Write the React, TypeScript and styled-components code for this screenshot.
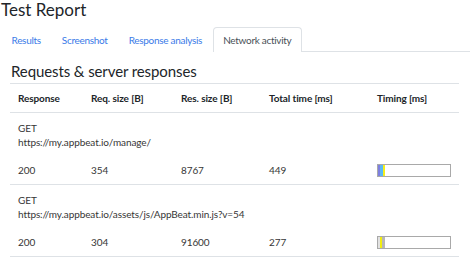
import styled, { createGlobalStyle } from "styled-components";

const GlobalStyle = createGlobalStyle`
  html, body {
    margin: 0;
    padding: 0;
    background: #fff;
  }
  body {
    font-family: Lato, "Open Sans", sans-serif;
    color: #212529;
  }
`;

const Page = styled.div`
  width: 474px;
  height: 266px;
  overflow: hidden;
  padding-left: 1px;
  box-sizing: border-box;
`;

const Title = styled.h1`
  margin: 0;
  font-size: 17px;
  font-weight: 400;
  line-height: 20px;
`;

const TabBar = styled.ul`
  display: flex;
  height: 24px;
  margin: 7px 4px 0 0;
  padding: 0;
  list-style: none;
  border-bottom: 1px solid #dee2e6;
`;

const Tab = styled.li<{ $active?: boolean }>`
  box-sizing: border-box;
  height: 25px;
  padding: 0 9.5px 1px;
  display: flex;
  align-items: center;
  font-size: 10px;
  letter-spacing: -0.3px;
  color: ${(p) => (p.$active ? "#495057" : "#3a7be8")};
  background: #fff;
  border: 1px solid ${(p) => (p.$active ? "#dee2e6" : "transparent")};
  border-bottom: none;
  border-radius: 4px 4px 0 0;
`;

const Content = styled.div`
  padding: 0 15px 0 9px;
`;

const Heading = styled.h2`
  margin: 10px 0 0;
  padding: 0 0 3px 1px;
  font-size: 15px;
  font-weight: 400;
  line-height: 18px;
  letter-spacing: -0.1px;
  border-bottom: 1px solid #dee2e6;
`;

const Table = styled.table`
  width: 449px;
  border-collapse: collapse;
  table-layout: fixed;
  font-size: 10px;
  line-height: 14px;
  letter-spacing: -0.1px;
  color: #363636;
`;

const HeadCell = styled.th`
  text-align: left;
  font-weight: 700;
  color: #212529;
  padding: 7px 8px;
  border-bottom: 1px solid #dee2e6;
  white-space: nowrap;
`;

const RequestCell = styled.td`
  padding: 8px 8px 6px;
  white-space: nowrap;
  overflow: hidden;
`;

const ValueCell = styled.td`
  padding: 8px 8px 7px;
  border-bottom: 1px solid #dee2e6;
  vertical-align: middle;
`;

const TimingBar = styled.div`
  display: flex;
  width: 72px;
  height: 11px;
  border: 1px solid #a9a9a9;
  background: #fff;
`;

const Segment = styled.div<{ $color: string; $w: number }>`
  width: ${(p) => p.$w}px;
  background: ${(p) => p.$color};
`;

interface Row {
  method: string;
  url: string;
  status: number;
  req: number;
  res: number;
  total: number;
  timing: { color: string; w: number }[];
}

const rows: Row[] = [
  {
    method: "GET",
    url: "https://my.appbeat.io/manage/",
    status: 200,
    req: 354,
    res: 8767,
    total: 449,
    timing: [
      { color: "#7d7fe0", w: 2 },
      { color: "#5cb8f5", w: 3 },
      { color: "#f5ef1a", w: 2 },
    ],
  },
  {
    method: "GET",
    url: "https://my.appbeat.io/assets/js/AppBeat.min.js?v=54",
    status: 200,
    req: 304,
    res: 91600,
    total: 277,
    timing: [
      { color: "#e2e2e2", w: 2 },
      { color: "#f2ee10", w: 2 },
      { color: "#b7b7b7", w: 3 },
    ],
  },
];

export default function App() {
  return (
    <Page>
      <GlobalStyle />
      <Title>Test Report</Title>
      <TabBar>
        <Tab>Results</Tab>
        <Tab>Screenshot</Tab>
        <Tab>Response analysis</Tab>
        <Tab $active>Network activity</Tab>
      </TabBar>
      <Content>
        <Heading>Requests &amp; server responses</Heading>
        <Table>
          <colgroup>
            <col style={{ width: 73 }} />
            <col style={{ width: 90 }} />
            <col style={{ width: 88 }} />
            <col style={{ width: 108 }} />
            <col style={{ width: 90 }} />
          </colgroup>
          <thead>
            <tr>
              <HeadCell>Response</HeadCell>
              <HeadCell>Req. size [B]</HeadCell>
              <HeadCell>Res. size [B]</HeadCell>
              <HeadCell>Total time [ms]</HeadCell>
              <HeadCell>Timing [ms]</HeadCell>
            </tr>
          </thead>
          <tbody>
            {rows.map((r) => (
              <>
                <tr key={r.url + "-req"}>
                  <RequestCell colSpan={5}>
                    {r.method}
                    <br />
                    {r.url}
                  </RequestCell>
                </tr>
                <tr key={r.url + "-val"}>
                  <ValueCell>{r.status}</ValueCell>
                  <ValueCell>{r.req}</ValueCell>
                  <ValueCell>{r.res}</ValueCell>
                  <ValueCell>{r.total}</ValueCell>
                  <ValueCell>
                    <TimingBar>
                      {r.timing.map((s, i) => (
                        <Segment key={i} $color={s.color} $w={s.w} />
                      ))}
                    </TimingBar>
                  </ValueCell>
                </tr>
              </>
            ))}
          </tbody>
        </Table>
      </Content>
    </Page>
  );
}
